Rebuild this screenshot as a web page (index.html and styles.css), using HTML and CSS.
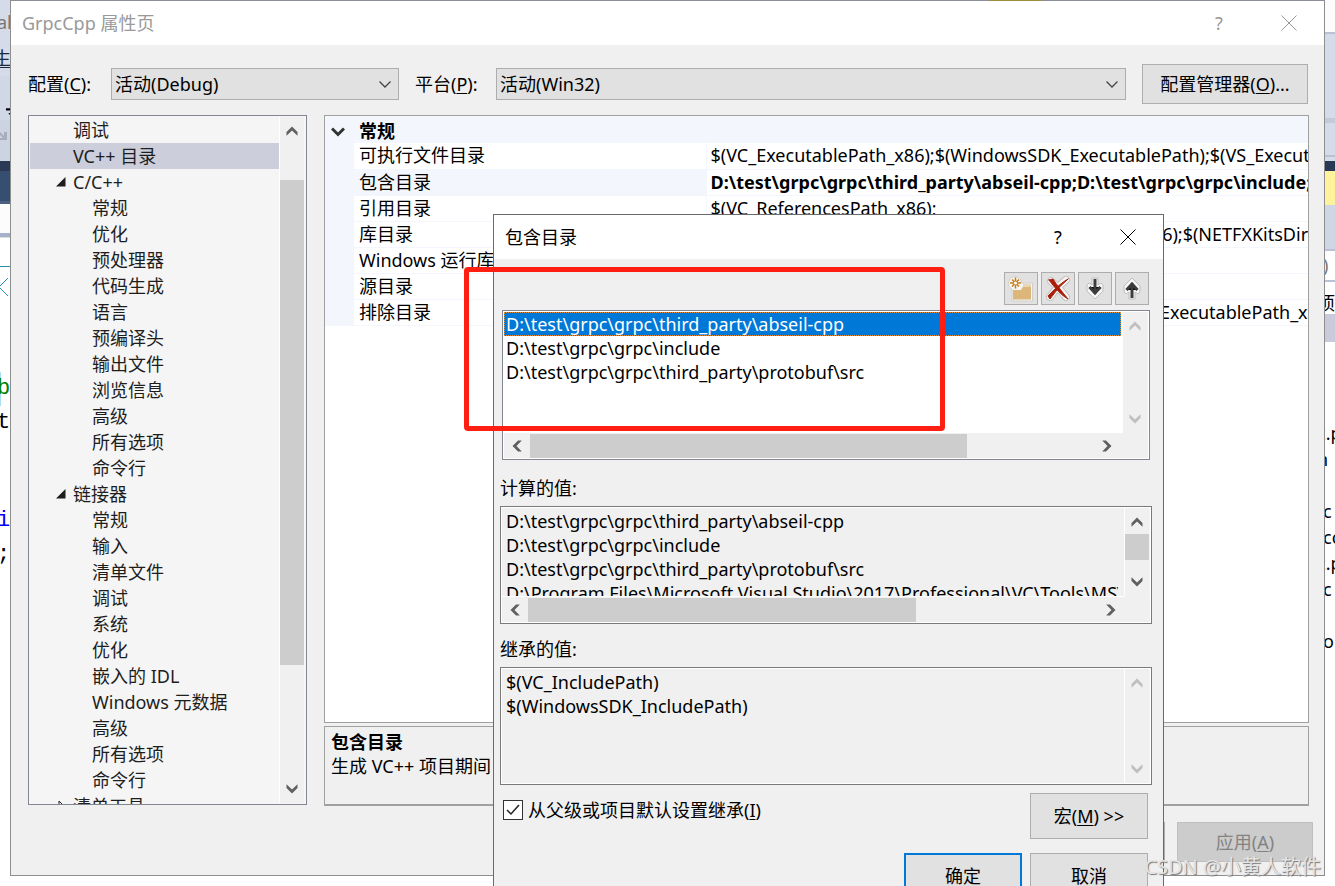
FILE: index.html
```html
<!DOCTYPE html>
<html lang="zh-CN">
<head>
<meta charset="utf-8">
<title>GrpcCpp 属性页</title>
<meta name="viewport" content="width=device-width, initial-scale=1">
<link rel="stylesheet" href="styles.css">
</head>
<body>
<svg class="defs" aria-hidden="true">
  <symbol id="up" viewBox="0 0 12 10"><path d="M0.500 6V9.800L6 4.500L11.500 9.800V6L6 0.500Z"/></symbol>
  <symbol id="down" viewBox="0 0 12 10"><path d="M0.500 4V0.200L6 5.500L11.500 0.200V4L6 9.500Z"/></symbol>
  <symbol id="left" viewBox="0 0 10 12"><path d="M6 0.500H9.800L4.500 6L9.800 11.500H6L0.500 6Z"/></symbol>
  <symbol id="right" viewBox="0 0 10 12"><path d="M4 0.500H0.200L5.500 6L0.200 11.500H4L9.500 6Z"/></symbol>
  <symbol id="close" viewBox="0 0 16 16"><path d="M0.500 0.500L15.500 15.500M15.500 0.500L0.500 15.500" fill="none" stroke="currentColor"/></symbol>
  <symbol id="chev" viewBox="0 0 12 7"><path d="M0.500 0.500L6 6L11.500 0.500" fill="none" stroke="currentColor" stroke-width="1.300"/></symbol>
  <symbol id="open" viewBox="0 0 10 10"><path d="M9.500 0V9.500H0Z"/></symbol>
</svg>

<div class="ide" aria-hidden="true">
  <div class="ide-left">
    <div class="menu caption">al</div>
    <div class="menu item"><u>生</u></div>
    <div class="tool one"><svg viewBox="0 0 10 10"><path d="M5 1h5v2H5zM7 5h3v4z"/></svg></div>
    <div class="tool two"><svg viewBox="0 0 10 14"><path d="M0 1L4 5V1H7V9H0V7H3L0 4Z"/></svg></div>
    <div class="navy"></div>
    <div class="steel"></div>
    <div class="blank"></div>
    <div class="rule"></div>
    <div class="editor">
      <span class="type"><svg width="10" height="20" viewBox="0 0 10 20"><path d="M8 1L-1 10L8 19" fill="none" stroke="currentColor"/></svg></span>
      <span class="hit">b</span>
      <span class="plain">t</span>
      <span class="key">i</span>
      <span class="semi">;</span>
    </div>
  </div>
  <div class="ide-right">
    <div class="blank"></div>
    <div class="bar one"></div>
    <div class="bar two"></div>
    <div class="bar three"></div>
    <div class="navy"></div>
    <div class="yellow"></div>
    <div class="bar four"></div>
    <div class="search">)</div>
    <div class="item">项</div>
    <div class="picked"></div>
    <div class="files">
      <span>c.p</span><span>n</span><span></span><span class="in">c</span><span class="in">cc</span><span>c.p</span><span class="in">c</span><span></span><span class="in">o</span>
    </div>
  </div>
</div>

<main class="window pages">
  <header class="titlebar inactive">
    <h1>GrpcCpp 属性页</h1>
    <button class="cap" aria-label="帮助">?</button>
    <button class="cap" aria-label="关闭"><svg width="16" height="16"><use href="#close"/></svg></button>
  </header>
  <div class="config">
    <label for="cfg">配置(<u>C</u>):</label>
    <div class="combo cfg"><select id="cfg"><option>活动(Debug)</option></select><svg width="12" height="7"><use href="#chev"/></svg></div>
    <label for="plat" class="plat-label">平台(<u>P</u>):</label>
    <div class="combo plat"><select id="plat"><option>活动(Win32)</option></select><svg width="12" height="7"><use href="#chev"/></svg></div>
    <button class="btn manager">配置管理器(<u>O</u>)...</button>
  </div>
  <div class="body">
    <nav class="tree">
      <ul>
        <li>调试</li>
        <li class="on">VC++ 目录</li>
        <li><svg width="10" height="10"><use href="#open"/></svg>C/C++</li>
        <li class="sub">常规</li>
        <li class="sub">优化</li>
        <li class="sub">预处理器</li>
        <li class="sub">代码生成</li>
        <li class="sub">语言</li>
        <li class="sub">预编译头</li>
        <li class="sub">输出文件</li>
        <li class="sub">浏览信息</li>
        <li class="sub">高级</li>
        <li class="sub">所有选项</li>
        <li class="sub">命令行</li>
        <li><svg width="10" height="10"><use href="#open"/></svg>链接器</li>
        <li class="sub">常规</li>
        <li class="sub">输入</li>
        <li class="sub">清单文件</li>
        <li class="sub">调试</li>
        <li class="sub">系统</li>
        <li class="sub">优化</li>
        <li class="sub">嵌入的 IDL</li>
        <li class="sub">Windows 元数据</li>
        <li class="sub">高级</li>
        <li class="sub">所有选项</li>
        <li class="sub">命令行</li>
        <li><svg width="10" height="10" viewBox="0 0 10 10"><path d="M3 0L8 5L3 10Z" fill="none" stroke="currentColor"/></svg>清单工具</li>
      </ul>
      <div class="vbar">
        <svg width="12" height="10"><use href="#up"/></svg>
        <div class="track"><div class="thumb tree-thumb"></div></div>
        <svg width="12" height="10"><use href="#down"/></svg>
      </div>
    </nav>
    <div class="side">
      <div class="grid">
        <table>
          <colgroup><col class="c-gutter"><col class="c-name"><col></colgroup>
          <thead><tr><th><svg width="14" height="10" viewBox="0 0 14 10"><path d="M1 1.500L7 7.500L13 1.500" fill="none" stroke="#333" stroke-width="3"/></svg></th><th colspan="2">常规</th></tr></thead>
          <tbody>
            <tr><td></td><td>可执行文件目录</td><td>$(VC_ExecutablePath_x86);$(WindowsSDK_ExecutablePath);$(VS_ExecutablePath);$(MSBuild_ExecutablePath)</td></tr>
            <tr class="on"><td></td><td>包含目录</td><td>D:\test\grpc\grpc\third_party\abseil-cpp;D:\test\grpc\grpc\include;D:\test\grpc\grpc\third_party\protobuf\src</td></tr>
            <tr><td></td><td>引用目录</td><td>$(VC_ReferencesPath_x86);</td></tr>
            <tr><td></td><td>库目录</td><td>$(VC_LibraryPath_x86);$(WindowsSDK_LibraryPath_x86);$(NETFXKitsDir)Lib\um\x86</td></tr>
            <tr><td></td><td>Windows 运行库目录</td><td></td></tr>
            <tr><td></td><td>源目录</td><td></td></tr>
            <tr><td></td><td>排除目录</td><td>$(VC_IncludePath);$(WindowsSDK_IncludePath);$(VC_ExecutablePath_x86)</td></tr>
          </tbody>
        </table>
      </div>
      <section class="desc">
        <h2>包含目录</h2>
        <p>生成 VC++ 项目期间</p>
      </section>
    </div>
  </div>
  <footer class="actions">
    <button class="btn">取消</button>
    <button class="btn" disabled>应用(<u>A</u>)</button>
  </footer>
</main>

<section class="window dialog" role="dialog" aria-labelledby="dlg">
  <header class="titlebar">
    <h2 id="dlg">包含目录</h2>
    <button class="cap" aria-label="帮助">?</button>
    <button class="cap" aria-label="关闭"><svg width="16" height="16"><use href="#close"/></svg></button>
  </header>
  <div class="toolbar">
    <button aria-label="新行"><svg width="26" height="26" viewBox="0 0 26 26">
      <path d="M4 25V13A6.500 6.500 0 1 1 13.500 7H24.500V25Z" fill="#f7f5f1" stroke="#d2cfca"/>
      <path d="M5 23.500V14H13L15 10.500H23V23.500Z" fill="#dcb67a"/><path d="M15 8.500H23V9.500H15Z" fill="#dcb67a"/>
      <path d="M7.500 1.500V12.500M2 7H13M4 3.500L11 10.500M11 3.500L4 10.500" stroke="#c27d1a" stroke-width="1.500"/><circle cx="7.500" cy="7" r="1.500" fill="#fff"/></svg></button>
    <button aria-label="删除"><svg width="26" height="26" viewBox="0 0 26 26" fill="none" stroke-linecap="round">
      <path d="M6 5Q13 11 21 21M21 4Q12 11 5 21" stroke="#c6c3c1" stroke-width="8"/>
      <path d="M6 5Q13 11 21 21M21 4Q12 11 5 21" stroke="#f7f6f5" stroke-width="6"/>
      <path d="M4 4L8 3Q13 11 23 23Q14 18 4 4Z" fill="#a81e0a" stroke="#a81e0a"/>
      <path d="M23 3Q14 8 3 20L5 23Q13 11 23 3Z" fill="#a81e0a" stroke="#a81e0a"/></svg></button>
    <button aria-label="下移"><svg width="26" height="26" viewBox="0 0 26 26" fill="none">
      <path d="M10 2H16V9L19 7L21 9V15L13 23L5 15V9L7 7L10 9Z" fill="#f5f5f5" stroke="#bdbdbd"/>
      <path d="M13 3V18M7.500 11L13 17L18.500 11" stroke="#3b3b3b" stroke-width="3"/></svg></button>
    <button aria-label="上移"><svg width="26" height="26" viewBox="0 0 26 26" fill="none">
      <path d="M10 23H16V16L19 18L21 16V10L13 2L5 10V16L7 18L10 16Z" fill="#f5f5f5" stroke="#bdbdbd"/>
      <path d="M13 22V7M7.500 14L13 8L18.500 14" stroke="#3b3b3b" stroke-width="3"/></svg></button>
  </div>
  <div class="box edit">
    <ul role="listbox" aria-label="包含目录">
      <li role="option" aria-selected="true">D:\test\grpc\grpc\third_party\abseil-cpp</li>
      <li role="option">D:\test\grpc\grpc\include</li>
      <li role="option">D:\test\grpc\grpc\third_party\protobuf\src</li>
    </ul>
    <div class="vbar off">
      <svg width="12" height="10"><use href="#up"/></svg>
      <svg width="12" height="10"><use href="#down"/></svg>
    </div>
    <div class="hbar">
      <svg width="10" height="12"><use href="#left"/></svg>
      <div class="track"><div class="thumb edit-thumb"></div></div>
      <svg width="10" height="12"><use href="#right"/></svg>
    </div>
  </div>
  <h3 id="calc">计算的值:</h3>
  <div class="box ro">
    <ul aria-labelledby="calc">
      <li>D:\test\grpc\grpc\third_party\abseil-cpp</li>
      <li>D:\test\grpc\grpc\include</li>
      <li>D:\test\grpc\grpc\third_party\protobuf\src</li>
      <li>D:\Program Files\Microsoft Visual Studio\2017\Professional\VC\Tools\MSVC</li>
    </ul>
    <div class="vbar">
      <svg width="12" height="10"><use href="#up"/></svg>
      <div class="track"><div class="thumb calc-thumb"></div></div>
      <svg width="12" height="10"><use href="#down"/></svg>
    </div>
    <div class="hbar">
      <svg width="10" height="12"><use href="#left"/></svg>
      <div class="track"><div class="thumb calc-wide"></div></div>
      <svg width="10" height="12"><use href="#right"/></svg>
    </div>
  </div>
  <h3 id="inh">继承的值:</h3>
  <div class="box ro">
    <ul class="tall" aria-labelledby="inh">
      <li>$(VC_IncludePath)</li>
      <li>$(WindowsSDK_IncludePath)</li>
    </ul>
    <div class="vbar tall off">
      <svg width="12" height="10"><use href="#up"/></svg>
      <svg width="12" height="10"><use href="#down"/></svg>
    </div>
  </div>
  <div class="bottom">
    <div class="check">
      <input type="checkbox" id="inherit" checked>
      <svg width="14" height="12" viewBox="0 0 14 12"><path d="M1 6L5 10L13 1" fill="none" stroke="#222" stroke-width="1.500"/></svg>
      <label for="inherit">从父级或项目默认设置继承(<u>I</u>)</label>
    </div>
    <button class="btn">宏(<u>M</u>) &gt;&gt;</button>
  </div>
  <div class="bottom confirm">
    <button class="btn primary">确定</button>
    <button class="btn">取消</button>
  </div>
</section>

<div class="marker"></div>
<div class="credit">CSDN @小黄人软件</div>
</body>
</html>
```

FILE: styles.css
```css
* { box-sizing: border-box; }

html, body { height: 100%; }

body {
  margin: 0;
  position: relative;
  overflow: hidden;
  background: #fff;
  color: #000;
  font: 18px/24px "Noto Sans", "Noto Sans CJK SC", sans-serif;
}

h1, h2, h3, p, ul { margin: 0; padding: 0; font-size: 18px; font-weight: 400; }
ul { list-style: none; }
button, select { font: inherit; color: inherit; padding: 0; border-radius: 0; }
svg { fill: currentColor; flex: none; }
u { text-underline-offset: 2px; text-decoration-thickness: 1px; }
.defs { display: none; }

/* IDE behind the windows */
.ide { display: flex; justify-content: space-between; height: 100%; }
.ide-left, .ide-right { width: 12px; overflow: hidden; white-space: nowrap; background: #fff; }
.ide-left > div, .ide-right > div { overflow: hidden; }
.menu { background: #d6dbe9; }
.caption { height: 44px; padding-top: 10px; color: #777; text-indent: -3px; }
.ide-left .item { height: 32px; padding-top: 2px; color: #1b293e; text-indent: -7px; }
.tool.one { height: 44px; background: #d0d7e6; padding-top: 24px; }
.tool.one svg { width: 12px; height: 12px; }
.tool.two { height: 41px; background: #ccd3e2; color: #a7adba; padding-top: 6px; }
.tool.two svg { width: 10px; height: 14px; }
.navy { height: 10px; background: #293955; }
.steel { height: 33px; background: #364e6f; border-bottom: 3px solid #4d6082; }
.ide-left .blank { height: 29px; background: #fcfcfc; }
.rule { height: 4px; background: #a5b1cb; }
.editor { display: flex; flex-direction: column; border-top: 1px solid #ddd; font-family: "Liberation Mono", monospace; font-size: 22px; }
.editor span { height: 34px; line-height: 34px; text-indent: -3px; }
.editor .type { margin-top: 28px; height: 84px; padding-top: 10px; line-height: 20px; color: #2b91af; border-top: 1px solid #2b91af; text-indent: 0; }
.editor .hit { margin-top: 22px; color: #008000; background: linear-gradient(90deg, #a8dff5 1px, #fff 1px); }
.editor .key { margin-top: 64px; color: #00f; }

.ide-right { padding-left: 2px; }
.ide-right .blank { height: 34px; background: #fcfcfc; border-bottom: 2px solid #b9c1d5; }
.bar { background: #d6dbe9; }
.bar.one { height: 86px; border-bottom: 2px solid #c3cadb; }
.bar.two { height: 37px; border-top: 3px solid #c3cadb; border-bottom: 2px solid #b9c1d5; }
.bar.three { height: 4px; }
.yellow { height: 34px; background: #fff29d; }
.bar.four { height: 46px; background: #cfd6e5; border-bottom: 2px solid #b9c1d5; }
.search { height: 31px; padding-top: 2px; color: #777; text-indent: -2px; border-bottom: 2px solid #b9c1d5; }
.ide-right .item { height: 32px; padding-top: 9px; text-indent: -8px; }
.picked { height: 28px; background: #c9cbdc; }
.files { padding-top: 78px; display: flex; flex-direction: column; }
.files span { height: 26px; line-height: 26px; text-indent: -8px; }
.files .in { text-indent: -2px; }

/* Windows */
.window { position: absolute; background: #f0f0f0; border: 1px solid #8e8e8e; display: flex; flex-direction: column; }
.titlebar { display: flex; align-items: center; height: 44px; background: #fff; padding-left: 11px; flex: none; }
.titlebar h1, .titlebar h2 { flex: 1; }
.titlebar.inactive { color: #999; }
.cap { width: 70px; height: 44px; border: 0; background: none; display: flex; align-items: center; justify-content: center; }

.btn { background: #e1e1e1; border: 1px solid #adadad; height: 46px; width: 118px; white-space: nowrap; }
.btn.primary { border: 2px solid #0078d7; }
.btn:disabled { background: #ccc; border-color: #bfbfbf; color: #838383; }

.pages { left: 10px; right: 10px; top: 0; bottom: 10px; }
.pages::before {
  content: ""; position: absolute; left: 0; right: 0; top: -1px; height: 1px;
  background: linear-gradient(90deg, #8a8d9a 979px, #a08c38 979px 1030px, #8a8d9a 1030px);
}
.config { display: flex; align-items: center; padding: 19px 16px 11px 17px; flex: none; }
.config label { width: 83px; white-space: nowrap; }
.config .plat-label { width: 81px; margin-left: 16px; }
.combo { position: relative; height: 32px; }
.combo select { width: 100%; height: 100%; appearance: none; background: #e1e1e1; border: 1px solid #adadad; padding-left: 3px; }
.combo svg { position: absolute; right: 8px; top: 13px; color: #444; }
.combo.cfg { width: 288px; }
.combo.plat { flex: 1; }
.manager { width: 166px; height: 40px; margin-left: 16px; }

.body { flex: 1; min-height: 0; display: flex; gap: 17px; padding: 0 15px 0 17px; }
.tree { width: 279px; margin-bottom: 1px; border: 1px solid #828790; padding: 1px; display: flex; background: #f5f5f5; overflow: hidden; color: #1e1e1e; }
.tree ul { flex: 1; }
.tree li { height: 26px; line-height: 26px; padding-left: 43px; white-space: nowrap; position: relative; }
.tree li.sub { padding-left: 62px; }
.tree li.on { background: #cccedb; }
.tree li svg { position: absolute; left: 26px; top: 8px; }

.vbar { width: 26px; display: flex; flex-direction: column; align-items: center; justify-content: space-between; background: #f0f0f0; border-left: 1px solid #fff; border-right: 1px solid #f5f5f5; padding: 9px 0; color: #606060; }
.vbar .track { flex: 1; width: 100%; }
.hbar { display: flex; align-items: center; height: 24px; padding: 0 8px; gap: 8px; color: #606060; background: #f0f0f0; }
.hbar .track { flex: 1; }
.thumb { background: #cdcdcd; height: 24px; }
.off { color: #bfbfbf; }
.tree-thumb { height: 485px; margin-top: 44px; }

.side { flex: 1; min-width: 0; display: flex; flex-direction: column; gap: 3px; }
.grid { flex: 1; min-height: 0; background: #fff; border: 1px solid #a0a0a0; overflow: hidden; }
.grid table { width: 100%; table-layout: fixed; border-collapse: collapse; }
.c-gutter { width: 29px; }
.c-name { width: 352px; }
.grid th, .grid td { height: 26px; line-height: 25px; padding: 0 0 0 5px; text-align: left; white-space: nowrap; overflow: hidden; }
.grid th { height: 27px; line-height: 24px; padding-top: 3px; background: #f3f6fc; font-weight: 700; }
.grid th:first-child { padding: 0 0 0 6px; }
.grid td { border-bottom: 1px solid #f3f6fc; }
.grid td:first-child { background: #f3f6fc; }
.grid td:last-child { padding-left: 4px; border-left: 1px solid #f3f6fc; }
.grid .on td:nth-child(2) { background: #f3f6fc; }
.grid .on td:last-child { font-weight: 700; }
.desc { height: 80px; border: 1px solid #a0a0a0; border-bottom-width: 2px; padding: 3px 6px; white-space: nowrap; overflow: hidden; }
.desc h2 { font-weight: 700; }

.actions { display: flex; justify-content: flex-end; gap: 12px; padding: 16px 11px 13px; flex: none; }
.actions .btn { width: 136px; height: 40px; }

/* Include directories dialog */
.dialog { left: 493px; top: 214px; width: 671px; padding-bottom: 12px; border-color: #6a6a6a; }
.toolbar { display: flex; justify-content: flex-end; gap: 3px; padding: 13px 14px 5px; }
.toolbar button { width: 34px; height: 33px; border: 1px solid #adadad; background: #e1e1e1; display: flex; align-items: center; justify-content: center; }
.box { display: grid; grid-template-columns: 1fr 26px; border: 1px solid #7a7a7a; padding: 1px; margin: 0 11px 0 6px; background: #f0f0f0; box-shadow: inset 0 0 0 1px #fff; }
.box ul { height: 88px; overflow: hidden; padding-top: 1px; min-width: 0; margin-right: 6px; }
.box li { height: 24px; line-height: 24px; padding-left: 4px; white-space: nowrap; }
.box .vbar { height: 88px; }
.box .tall { height: 114px; }
.box .hbar { border-top: 1px solid #fff; height: 26px; }
.edit { margin: 0 13px 0 8px; border-color: #828790; background: #fff; }
.edit ul { height: 121px; padding: 0; margin-right: 1px; }
.edit li { padding-left: 2px; }
.edit li[aria-selected] { background: #0078d7; color: #fff; outline: 1px dotted #e08a3c; outline-offset: -1px; }
.edit .vbar { height: 121px; }
.box.edit .hbar { grid-column: 1 / -1; padding-right: 36px; height: 25px; border-top: 0; }
.edit-thumb { width: 437px; }
.calc-thumb { height: 26px; margin-top: 7px; }
.calc-wide { width: 388px; }
.dialog h3 { padding: 16px 0 6px 6px; }
.ro + h3 { padding: 13px 0 6px 6px; }

.bottom { display: flex; justify-content: space-between; align-items: flex-start; padding: 8px 15px 0 9px; }
.confirm { justify-content: flex-end; gap: 8px; padding-top: 14px; }
.check { display: flex; align-items: center; gap: 5px; padding-top: 5px; position: relative; }
.check input { appearance: none; width: 20px; height: 20px; margin: 0; border: 1px solid #333; background: #fff; }
.check svg { position: absolute; left: 3px; top: 11px; display: none; }
.check input:checked + svg { display: block; }

.marker { position: absolute; left: 464px; top: 267px; width: 481px; height: 164px; border: 5px solid #ff1f12; border-radius: 4px; }
.credit { position: absolute; right: 14px; bottom: 6px; font-size: 20px; line-height: 26px; color: #e4e4e4; text-shadow: 1px 1px 1px #777; white-space: nowrap; }
```
